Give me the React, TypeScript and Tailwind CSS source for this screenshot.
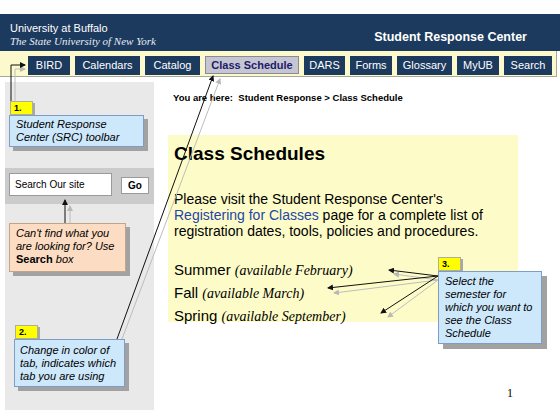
import React from "react";

const tabs: { label: string; w: string; active?: boolean }[] = [
  { label: "BIRD", w: "w-[42px]" },
  { label: "Calendars", w: "w-[65px]" },
  { label: "Catalog", w: "w-[55px]" },
  { label: "Class Schedule", w: "w-[94px]", active: true },
  { label: "DARS", w: "w-[41px]" },
  { label: "Forms", w: "w-[42px]" },
  { label: "Glossary", w: "w-[55px]" },
  { label: "MyUB", w: "w-[42px]" },
  { label: "Search", w: "w-[48px]" },
];

function Label({ n }: { n: string }) {
  return (
    <div className="w-[23px] h-[14px] bg-[#ffff00] border border-[#b0b090] text-[9px] font-bold leading-[12px] pl-[3px] shadow-[2px_2px_0_#a8a8a8]">
      {n}
    </div>
  );
}

export default function App() {
  return (
    <div className="relative w-[560px] h-[420px] bg-white overflow-hidden font-['Liberation_Sans',Arial,sans-serif] text-black">
      <div className="h-[14px]" />
      <header className="h-[37px] bg-[#1c3a5e] flex justify-between text-white">
        <div className="pl-[10px] pt-[8px]">
          <div className="text-[11px] leading-[13px]">University at Buffalo</div>
          <div className="text-[11px] leading-[13px] italic font-['Liberation_Serif',serif] text-[#e8ecf4]">
            The State University of New York
          </div>
        </div>
        <div className="pr-[33px] pt-[15px] text-[12.5px] font-bold leading-[16px]">Student Response Center</div>
      </header>
      <nav className="h-[26px] w-[557px] bg-[#fcfacc] border-b border-r border-[#a8a89a] flex gap-[5px] pl-[28px] pt-[5px]">
        {tabs.map((t) =>
          t.active ? (
            <div
              key={t.label}
              className={`${t.w} h-[18px] bg-[#c6c6d2] border border-[#8a8a96] flex items-center justify-center text-[11px] font-bold text-[#1b1b6a]`}
            >
              {t.label}
            </div>
          ) : (
            <div
              key={t.label}
              className={`${t.w} h-[19px] bg-[#1c3a5e] flex items-center justify-center text-[11px] text-white`}
            >
              {t.label}
            </div>
          )
        )}
      </nav>
      <div className="flex">
        <aside className="ml-[5px] mt-[5px] w-[149px] h-[328px] bg-[#e9e9e9] flex flex-col">
          <div className="mt-[19px] ml-[5px]">
            <Label n="1." />
          </div>
          <div className="ml-[4px] w-[135px] h-[32px] bg-[#cde8fb] border border-[#7d9dc6] shadow-[4px_4px_0_#a2a2a2] italic text-[11px] leading-[13px] pl-[6px] pt-[2px]">
            Student Response
            <br />
            Center (SRC) toolbar
          </div>
          <div className="mt-[21px] h-[36px] bg-[#cbcbcb] flex items-start pl-[4px] pt-[5px]">
            <div className="w-[103px] h-[23px] bg-white border border-[#9a9a9a] text-[10px] leading-[21px] pl-[5px]">
              Search Our site
            </div>
            <div className="ml-[9px] mt-[4px] w-[28px] h-[17px] bg-white border border-[#9a9a9a] text-[10px] font-bold flex items-center justify-center">
              Go
            </div>
          </div>
          <div className="mt-[19px] ml-[4px] w-[117px] h-[49px] bg-[#fcdcc2] border border-[#c4a486] shadow-[4px_4px_0_#a2a2a2] italic text-[11px] leading-[13px] pl-[6px] pt-[3px]">
            Can't find what you
            <br />
            are looking for? Use
            <br />
            <span className="not-italic font-bold">Search</span> box
          </div>
          <div className="mt-[53px] ml-[10px]">
            <Label n="2." />
          </div>
          <div className="ml-[9px] w-[111px] h-[48px] bg-[#cde8fb] border border-[#7d9dc6] shadow-[4px_4px_0_#a2a2a2] italic text-[11px] leading-[13px] pl-[5px] pt-[4px]">
            Change in color of
            <br />
            tab, indicates which
            <br />
            tab you are using
          </div>
        </aside>
        <main className="ml-[14px] flex-1 flex flex-col">
          <div className="mt-[15px] ml-[5px] text-[9.5px] font-bold leading-[11px]">
            You are here:&nbsp; Student Response &gt; Class Schedule
          </div>
          <section className="mt-[32px] w-[350px] h-[187px] bg-[#fdfcc8] pl-[6px] pt-[7px]">
            <h1 className="text-[19px] font-bold leading-[24px]">Class Schedules</h1>
            <p className="mt-[25px] text-[14px] leading-[16px]">
              Please visit the Student Response Center's
              <br />
              <span className="text-[#2546a6]">Registering for Classes</span> page for a complete list of
              <br />
              registration dates, tools, policies and procedures.
            </p>
            <div className="mt-[21px] flex flex-col gap-[3px] text-[15px] leading-[19px]">
              <div>
                Summer <span className="italic font-['Liberation_Serif',serif] text-[14px]">(available February)</span>
              </div>
              <div>
                Fall <span className="italic font-['Liberation_Serif',serif] text-[14px]">(available March)</span>
              </div>
              <div>
                Spring <span className="italic font-['Liberation_Serif',serif] text-[14px]">(available September)</span>
              </div>
            </div>
          </section>
        </main>
      </div>

      {/* callout 3 */}
      <div className="absolute left-[438px] top-[257px]">
        <Label n="3." />
        <div className="w-[104px] h-[73px] bg-[#cde8fb] border border-[#7d9dc6] shadow-[5px_5px_0_#a2a2a2] italic text-[11px] leading-[13px] pl-[6px] pt-[3px]">
          Select the
          <br />
          semester for
          <br />
          which you want to
          <br />
          see the Class
          <br />
          Schedule
        </div>
      </div>

      <div className="absolute left-[507px] top-[384px] text-[12px] font-['Liberation_Serif',serif]">1</div>

      <svg className="absolute inset-0 pointer-events-none" width="560" height="420" viewBox="0 0 560 420">
        <defs>
          <marker id="ab" markerWidth="6" markerHeight="6" refX="5" refY="3" orient="auto" markerUnits="userSpaceOnUse">
            <path d="M0,0 L6,3 L0,6 z" fill="#111" />
          </marker>
          <marker id="ag" markerWidth="6" markerHeight="6" refX="5" refY="3" orient="auto" markerUnits="userSpaceOnUse">
            <path d="M0,0 L6,3 L0,6 z" fill="#b8b8b8" />
          </marker>
        </defs>
        {/* 1 -> BIRD */}
        <polyline points="15,101 15,69 25,69" fill="none" stroke="#bcbcbc" strokeWidth="1" markerEnd="url(#ag)" />
        <polyline points="11,101 11,65 25,65" fill="none" stroke="#111" strokeWidth="1" markerEnd="url(#ab)" />
        {/* 2 -> Class Schedule */}
        <line x1="122" y1="339" x2="220" y2="79" stroke="#bcbcbc" strokeWidth="1" markerEnd="url(#ag)" />
        <line x1="117" y1="339" x2="213" y2="76" stroke="#111" strokeWidth="1" markerEnd="url(#ab)" />
        {/* search */}
        <line x1="70" y1="223" x2="70" y2="206" stroke="#bcbcbc" strokeWidth="1" markerEnd="url(#ag)" />
        <line x1="65" y1="223" x2="65" y2="200" stroke="#111" strokeWidth="1" markerEnd="url(#ab)" />
        {/* 3 -> semesters */}
        <line x1="438" y1="280" x2="394" y2="274" stroke="#bcbcbc" strokeWidth="1" markerEnd="url(#ag)" />
        <line x1="438" y1="280" x2="334" y2="293" stroke="#bcbcbc" strokeWidth="1" markerEnd="url(#ag)" />
        <line x1="438" y1="280" x2="388" y2="317" stroke="#bcbcbc" strokeWidth="1" markerEnd="url(#ag)" />
        <line x1="438" y1="276" x2="389" y2="270" stroke="#111" strokeWidth="1" markerEnd="url(#ab)" />
        <line x1="438" y1="276" x2="328" y2="288" stroke="#111" strokeWidth="1" markerEnd="url(#ab)" />
        <line x1="438" y1="276" x2="381" y2="313" stroke="#111" strokeWidth="1" markerEnd="url(#ab)" />
      </svg>
    </div>
  );
}
